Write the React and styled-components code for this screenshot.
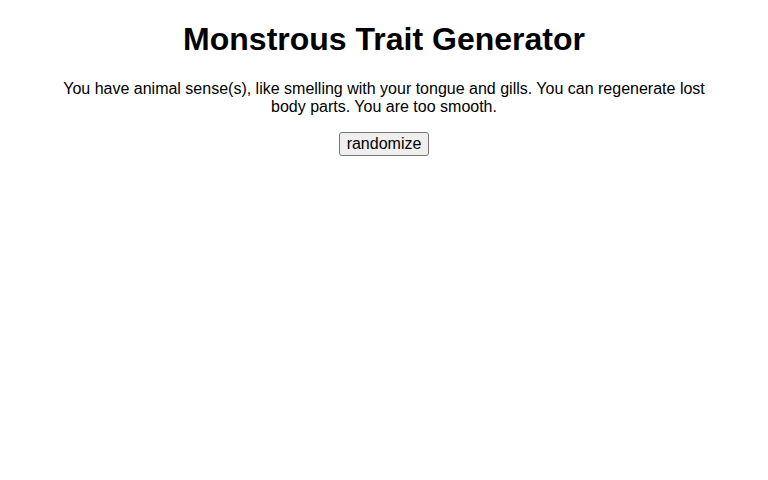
import React, { useState } from "react";
import styled, { createGlobalStyle } from "styled-components";

const GlobalStyle = createGlobalStyle`
  html, body {
    margin: 0;
    padding: 0;
    background: #ffffff;
  }
  body {
    font-family: "Liberation Sans", Arial, sans-serif;
    color: #000000;
  }
`;

const Page = styled.main`
  margin: 8px;
  text-align: center;
`;

const Title = styled.h1`
  font-size: 32px;
  font-weight: bold;
  line-height: normal;
  margin: 21.44px 0;
`;

const Traits = styled.p`
  font-size: 16px;
  line-height: normal;
  margin: 16px auto;
  max-width: 660px;
`;

const RandomizeButton = styled.button`
  font-family: "Liberation Sans", Arial, sans-serif;
  font-size: 16px;
  line-height: normal;
  color: #000000;
  background: #efefef;
  border: 1px solid #767676;
  border-radius: 3px;
  padding: 2px 7px;
  cursor: pointer;

  &:hover {
    background: #e5e5e5;
  }
`;

const senses = [
  "You have animal sense(s), like smelling with your tongue and gills.",
  "You can see in the dark, but light hurts your eyes.",
  "You hear the heartbeat of anything near you.",
];
const bodies = [
  "You can regenerate lost body parts.",
  "Your skin is covered in tiny scales.",
  "You have an extra pair of arms.",
];
const quirks = ["You are too smooth.", "You are always damp.", "You smell faintly of brine."];

const pick = (list) => list[Math.floor(Math.random() * list.length)];

export default function App() {
  const [trait, setTrait] = useState(`${senses[0]} ${bodies[0]} ${quirks[0]}`);

  return (
    <>
      <GlobalStyle />
      <Page>
        <Title>Monstrous Trait Generator</Title>
        <Traits>{trait}</Traits>
        <RandomizeButton
          type="button"
          onClick={() => setTrait(`${pick(senses)} ${pick(bodies)} ${pick(quirks)}`)}
        >
          randomize
        </RandomizeButton>
      </Page>
    </>
  );
}
